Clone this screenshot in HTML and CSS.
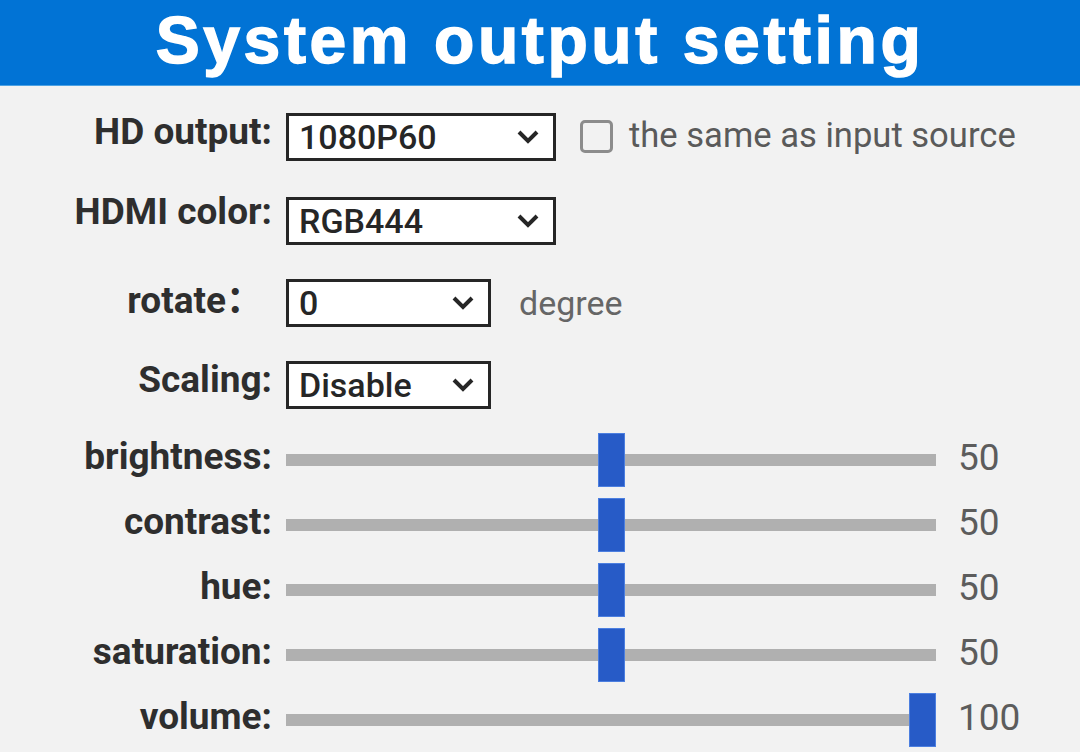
FILE: index.html
```html
<!DOCTYPE html>
<html lang="en">
  <head>
    <meta charset="UTF-8" />
    <meta name="viewport" content="width=device-width, initial-scale=1.0" />
    <title>System output setting</title>
    <link rel="stylesheet" href="styles.css">
  </head>
  <body>
    <header class="title-bar">
      <h1>System output setting</h1>
    </header>

    <form class="settings">
      <div class="row">
        <label class="label" for="hd-output">HD output:</label>
        <div class="select wide">
          <select id="hd-output">
            <option>1080P60</option>
            <option>1080P50</option>
            <option>720P60</option>
          </select>
          <svg class="chevron" viewBox="0 0 22 14"><path d="M2 2 L11 11 L20 2" /></svg>
        </div>
        <label class="check">
          <input type="checkbox" />
          <span>the same as input source</span>
        </label>
      </div>

      <div class="row">
        <label class="label label-high" for="hdmi-color">HDMI color:</label>
        <div class="select wide">
          <select id="hdmi-color">
            <option>RGB444</option>
            <option>YUV444</option>
            <option>YUV422</option>
          </select>
          <svg class="chevron" viewBox="0 0 22 14"><path d="M2 2 L11 11 L20 2" /></svg>
        </div>
      </div>

      <div class="row">
        <label class="label label-low" for="rotate">rotate：</label>
        <div class="select narrow">
          <select id="rotate">
            <option>0</option>
            <option>90</option>
            <option>180</option>
            <option>270</option>
          </select>
          <svg class="chevron" viewBox="0 0 22 14"><path d="M2 2 L11 11 L20 2" /></svg>
        </div>
        <span class="unit">degree</span>
      </div>

      <div class="row">
        <label class="label" for="scaling">Scaling:</label>
        <div class="select narrow">
          <select id="scaling">
            <option>Disable</option>
            <option>Enable</option>
          </select>
          <svg class="chevron" viewBox="0 0 22 14"><path d="M2 2 L11 11 L20 2" /></svg>
        </div>
      </div>

      <div class="sliders">
        <div class="slider-row">
          <label class="label" for="brightness">brightness:</label>
          <input type="range" id="brightness" min="0" max="100" value="50" />
          <span class="value">50</span>
        </div>
        <div class="slider-row">
          <label class="label" for="contrast">contrast:</label>
          <input type="range" id="contrast" min="0" max="100" value="50" />
          <span class="value">50</span>
        </div>
        <div class="slider-row">
          <label class="label" for="hue">hue:</label>
          <input type="range" id="hue" min="0" max="100" value="50" />
          <span class="value">50</span>
        </div>
        <div class="slider-row">
          <label class="label" for="saturation">saturation:</label>
          <input type="range" id="saturation" min="0" max="100" value="50" />
          <span class="value">50</span>
        </div>
        <div class="slider-row">
          <label class="label" for="volume">volume:</label>
          <input type="range" id="volume" min="0" max="100" value="100" />
          <span class="value">100</span>
        </div>
      </div>
    </form>

    <script>
      // keep the number beside each slider in step with it
      document.querySelectorAll(".slider-row").forEach((row) => {
        const input = row.querySelector("input");
        const value = row.querySelector(".value");
        input.addEventListener("input", () => {
          value.textContent = input.value;
        });
      });
    </script>
  </body>
</html>
```

FILE: styles.css
```css
body {
  font-family: Roboto, "Noto Sans CJK SC", "Liberation Sans", Arial, sans-serif;
  margin: 0;
  padding: 0;
  background-color: #f2f2f2;
  color: #2e2e2e;
}
.title-bar {
  height: 85px;
  background-color: #0173d5;
  border-bottom: 1px solid #4da2e3;
  text-align: center;
}
.title-bar h1 {
  margin: 0;
  font-family: "Liberation Sans", Arial, sans-serif;
  font-size: 66px;
  line-height: 80px;
  font-weight: bold;
  letter-spacing: 3.6px;
  color: #fff;
  -webkit-text-stroke: 1.5px #fff;
}
.settings {
  padding-top: 27px;
}
.row {
  display: flex;
  align-items: center;
  height: 48px;
  margin-bottom: 34px;
}
.row:first-child {
  margin-bottom: 36px;
}
.label {
  width: 272px;
  flex-shrink: 0;
  margin-right: 14px;
  padding-bottom: 10px;
  text-align: right;
  font-size: 37px;
  font-weight: bold;
  line-height: 48px;
  white-space: nowrap;
}
.label-high {
  padding-bottom: 18px;
}
.label-low {
  width: 263px;
  padding-right: 9px;
  padding-bottom: 4px;
}
.select {
  position: relative;
  height: 48px;
  box-sizing: border-box;
}
.select.wide {
  width: 270px;
}
.select.narrow {
  width: 205px;
}
.select select {
  appearance: none;
  -webkit-appearance: none;
  width: 100%;
  height: 100%;
  margin: 0;
  padding: 0 0 0 10px;
  border: 3px solid #262626;
  border-radius: 0;
  background-color: #fff;
  font-family: Roboto, sans-serif;
  font-size: 34px;
  font-weight: 500;
  color: #262626;
  outline: none;
}
.chevron {
  position: absolute;
  top: 17px;
  right: 17px;
  width: 22px;
  height: 14px;
  pointer-events: none;
}
.chevron path {
  fill: none;
  stroke: #262626;
  stroke-width: 4;
}
.check {
  display: flex;
  align-items: center;
  margin-left: 24px;
  padding-bottom: 4px;
  color: #5a5a5a;
  font-size: 34.6px;
}
.check input {
  appearance: none;
  -webkit-appearance: none;
  width: 33px;
  height: 33px;
  margin: 2px 16px 0 0;
  border: 3px solid #8c8c8c;
  border-radius: 5px;
  background-color: #f2f2f2;
}
.unit {
  margin-left: 28px;
  color: #666;
  font-size: 34px;
}
.sliders {
  display: flex;
  flex-direction: column;
  gap: 11px;
  margin-top: -10px;
}
.slider-row {
  display: flex;
  align-items: center;
  height: 54px;
}
.slider-row .label {
  line-height: 54px;
  padding-bottom: 6px;
}
.slider-row input[type="range"] {
  -webkit-appearance: none;
  appearance: none;
  width: 650px;
  height: 54px;
  margin: 0;
  background: transparent;
}
.slider-row input[type="range"]::-webkit-slider-runnable-track {
  height: 12px;
  background-color: #b0b0b0;
  border: none;
}
.slider-row input[type="range"]::-webkit-slider-thumb {
  -webkit-appearance: none;
  width: 27px;
  height: 54px;
  margin-top: -21px;
  background-color: #275bc7;
  border: 1px solid #4c7fe0;
  box-sizing: border-box;
  border-radius: 0;
}
.value {
  margin-left: 22px;
  padding-bottom: 6px;
  color: #5c5c5c;
  font-size: 37px;
}
```
